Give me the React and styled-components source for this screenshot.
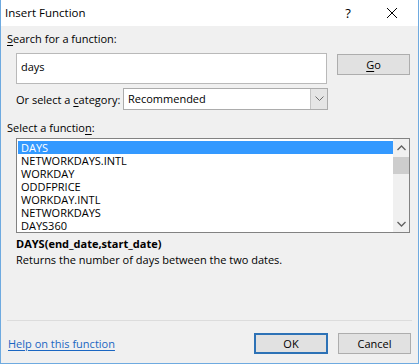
import React from 'react'
import styled, { createGlobalStyle } from 'styled-components'

const functions = [
    'DAYS',
    'NETWORKDAYS.INTL',
    'WORKDAY',
    'ODDFPRICE',
    'WORKDAY.INTL',
    'NETWORKDAYS',
    'DAYS360',
]

export default function App() {
    return (
        <>
            <GlobalStyle />
            <StyledWindow>
                <StyledTitleBar>
                    <StyledTitle>Insert Function</StyledTitle>
                    <StyledHelpGlyph>?</StyledHelpGlyph>
                    <StyledCloseButton>
                        <svg width="12" height="12" viewBox="0 0 12 12">
                            <path d="M1 1 L11 11 M11 1 L1 11" stroke="#000" strokeWidth="1" fill="none" />
                        </svg>
                    </StyledCloseButton>
                </StyledTitleBar>

                <StyledBody>
                    <StyledLabel>
                        <u>S</u>earch for a function:
                    </StyledLabel>

                    <StyledSearchRow>
                        <StyledSearchBox>days</StyledSearchBox>
                        <StyledButton $top={1}>
                            <u>G</u>o
                        </StyledButton>
                    </StyledSearchRow>

                    <StyledCategoryRow>
                        <StyledCategoryLabel>
                            Or select a <u>c</u>ategory:
                        </StyledCategoryLabel>
                        <StyledSelect>
                            <StyledSelectValue>Recommended</StyledSelectValue>
                            <StyledSelectArrow>
                                <svg width="9" height="6" viewBox="0 0 9 6">
                                    <path d="M0.5 0.5 L4.5 4.5 L8.5 0.5" stroke="#6d6d6d" strokeWidth="1" fill="none" />
                                </svg>
                            </StyledSelectArrow>
                        </StyledSelect>
                    </StyledCategoryRow>

                    <StyledLabel $top={10}>
                        Select a functio<u>n</u>:
                    </StyledLabel>

                    <StyledListBox>
                        <StyledList>
                            {functions.map((name, i) => (
                                <StyledListItem key={name} $selected={i === 0}>
                                    {name}
                                </StyledListItem>
                            ))}
                        </StyledList>
                        <StyledScrollbar>
                            <StyledScrollArrow>
                                <svg width="9" height="6" viewBox="0 0 9 6">
                                    <path d="M0.5 5 L4.5 1 L8.5 5" stroke="#606060" strokeWidth="1.3" fill="none" />
                                </svg>
                            </StyledScrollArrow>
                            <StyledScrollThumb />
                            <StyledScrollTrack />
                            <StyledScrollArrow>
                                <svg width="9" height="6" viewBox="0 0 9 6">
                                    <path d="M0.5 1 L4.5 5 L8.5 1" stroke="#606060" strokeWidth="1.3" fill="none" />
                                </svg>
                            </StyledScrollArrow>
                        </StyledScrollbar>
                    </StyledListBox>

                    <StyledSyntax>DAYS(end_date,start_date)</StyledSyntax>
                    <StyledDescription>Returns the number of days between the two dates.</StyledDescription>

                    <StyledSpacer />
                    <StyledSeparator />

                    <StyledFooter>
                        <StyledHelpLink href="#">Help on this function</StyledHelpLink>
                        <StyledButton $primary>OK</StyledButton>
                        <StyledButton>Cancel</StyledButton>
                    </StyledFooter>
                </StyledBody>
            </StyledWindow>
        </>
    )
}

const GlobalStyle = createGlobalStyle`
    body {
        margin: 0;
        font-family: "Segoe UI", "Open Sans", "Noto Sans", sans-serif;
        font-size: 11px;
        color: #000;
    }
    u {
        text-decoration: underline;
        text-underline-offset: 2px;
    }
`

const StyledWindow = styled.div`
    width: 419px;
    height: 364px;
    box-sizing: border-box;
    border: 1px solid #6eaae0;
    border-top: none;
    background: #f0f0f0;
    display: flex;
    flex-direction: column;
`

const StyledTitleBar = styled.div`
    height: 26px;
    background: #ffffff;
    display: flex;
    align-items: center;
    padding-left: 4px;
    flex-shrink: 0;
`

const StyledTitle = styled.div`
    flex: 1;
    font-size: 11.5px;
    line-height: 16px;
`

const StyledHelpGlyph = styled.div`
    width: 12px;
    font-size: 13px;
    text-align: center;
    margin-right: 32px;
`

const StyledCloseButton = styled.div`
    width: 12px;
    height: 12px;
    margin-right: 20px;
    display: flex;
`

const StyledBody = styled.div`
    flex: 1;
    display: flex;
    flex-direction: column;
    padding: 5px 7px 9px 6px;
`

const StyledLabel = styled.div`
    line-height: 15px;
    margin-top: ${p => p.$top || 0}px;
    white-space: nowrap;
`

const StyledSearchRow = styled.div`
    display: flex;
    align-items: flex-start;
    gap: 10px;
    margin-top: 7px;
    padding-left: 9px;
`

const StyledSearchBox = styled.div`
    width: 311px;
    height: 31px;
    box-sizing: border-box;
    background: #ffffff;
    border: 1px solid #b9b9b9;
    padding: 5px 4px;
    line-height: 15px;
`

const StyledButton = styled.div`
    width: ${p => (p.$primary ? 74 : 73)}px;
    height: 21px;
    box-sizing: border-box;
    margin-top: ${p => p.$top || 0}px;
    background: #e1e1e1;
    border: ${p => (p.$primary ? '2px solid #2d72b6' : '1px solid #adadad')};
    display: flex;
    align-items: center;
    justify-content: center;
    line-height: 15px;
    flex-shrink: 0;
`

const StyledCategoryRow = styled.div`
    display: flex;
    align-items: center;
    margin-top: 4px;
    padding-left: 9px;
`

const StyledCategoryLabel = styled.div`
    width: 107px;
    flex-shrink: 0;
    white-space: nowrap;
`

const StyledSelect = styled.div`
    width: 205px;
    height: 22px;
    box-sizing: border-box;
    border: 1px solid #acacac;
    background: #ffffff;
    display: flex;
`

const StyledSelectValue = styled.div`
    flex: 1;
    padding-left: 4px;
    line-height: 20px;
`

const StyledSelectArrow = styled.div`
    width: 16px;
    background: #e5e5e5;
    border-left: 1px solid #c4c4c4;
    display: flex;
    align-items: center;
    justify-content: center;
`

const StyledListBox = styled.div`
    width: 394px;
    height: 95px;
    box-sizing: border-box;
    margin-top: 3px;
    margin-left: 9px;
    border: 1px solid #828282;
    background: #ffffff;
    display: flex;
`

const StyledList = styled.div`
    flex: 1;
    padding-top: 2px;
    padding-left: 1px;
    overflow: hidden;
`

const StyledListItem = styled.div`
    height: 13px;
    line-height: 13px;
    padding-left: 3px;
    white-space: nowrap;
    background: ${p => (p.$selected ? '#3399ff' : 'transparent')};
    color: ${p => (p.$selected ? '#ffffff' : '#000000')};
`

const StyledScrollbar = styled.div`
    width: 16px;
    background: #f0f0f0;
    display: flex;
    flex-direction: column;
`

const StyledScrollArrow = styled.div`
    height: 17px;
    display: flex;
    align-items: center;
    justify-content: center;
`

const StyledScrollThumb = styled.div`
    height: 17px;
    margin-top: 1px;
    background: #cdcdcd;
`

const StyledScrollTrack = styled.div`
    flex: 1;
`

const StyledSyntax = styled.div`
    font-weight: bold;
    line-height: 15px;
    margin-top: 3px;
    padding-left: 9px;
`

const StyledDescription = styled.div`
    line-height: 15px;
    margin-top: 1px;
    padding-left: 9px;
`

const StyledSpacer = styled.div`
    flex: 1;
`

const StyledSeparator = styled.div`
    height: 1px;
    background: #dcdcdc;
    margin-right: -1px;
`

const StyledFooter = styled.div`
    display: flex;
    align-items: center;
    gap: 10px;
    margin-top: 12px;
`

const StyledHelpLink = styled.a`
    flex: 1;
    color: #1a66c2;
    text-decoration: underline;
    text-underline-offset: 2px;
    line-height: 15px;
    padding-left: 1px;
`
